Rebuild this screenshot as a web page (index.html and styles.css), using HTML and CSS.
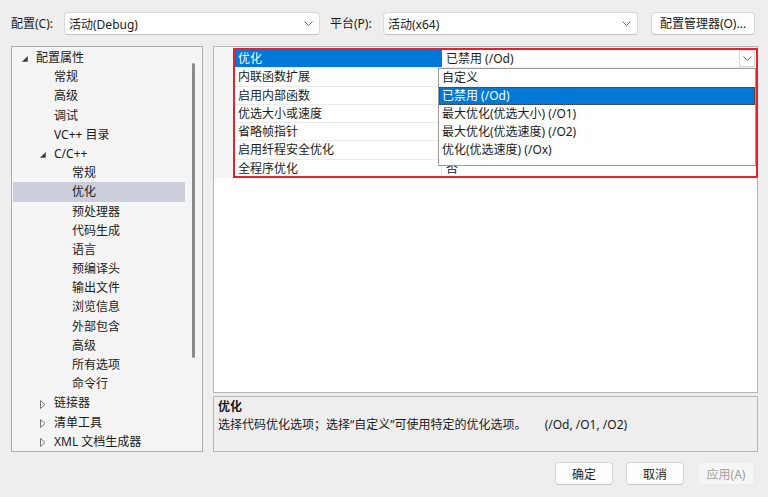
FILE: index.html
```html
<!DOCTYPE html>
<html lang="zh-CN">
<head>
  <meta charset="UTF-8" />
  <title>属性页</title>
  <link rel="stylesheet" href="styles.css">
</head>
<body>

  <div class="toolbar">
    <label class="field-label">配置(C):</label>
    <div class="combo combo-config">
      <span>活动(Debug)</span>
      <svg class="chev" width="9" height="5" viewBox="0 0 9 5"><path d="M0.5 0.5 L4.5 4.5 L8.5 0.5" /></svg>
    </div>
    <label class="field-label platform-label">平台(P):</label>
    <div class="combo combo-platform">
      <span>活动(x64)</span>
      <svg class="chev" width="9" height="5" viewBox="0 0 9 5"><path d="M0.5 0.5 L4.5 4.5 L8.5 0.5" /></svg>
    </div>
    <button class="btn btn-manager">配置管理器(O)...</button>
  </div>

  <div class="main">
    <div class="tree">
      <ul>
        <li class="lvl1"><span class="arrow"><svg width="6" height="6" viewBox="0 0 6 6"><polygon class="open" points="5.5,0.5 5.5,5.5 0.5,5.5" /></svg></span>配置属性</li>
        <li class="lvl2">常规</li>
        <li class="lvl2">高级</li>
        <li class="lvl2">调试</li>
        <li class="lvl2">VC++ 目录</li>
        <li class="lvl2 has-arrow"><span class="arrow"><svg width="6" height="6" viewBox="0 0 6 6"><polygon class="open" points="5.5,0.5 5.5,5.5 0.5,5.5" /></svg></span>C/C++</li>
        <li class="lvl3">常规</li>
        <li class="lvl3 selected">优化</li>
        <li class="lvl3">预处理器</li>
        <li class="lvl3">代码生成</li>
        <li class="lvl3">语言</li>
        <li class="lvl3">预编译头</li>
        <li class="lvl3">输出文件</li>
        <li class="lvl3">浏览信息</li>
        <li class="lvl3">外部包含</li>
        <li class="lvl3">高级</li>
        <li class="lvl3">所有选项</li>
        <li class="lvl3">命令行</li>
        <li class="lvl2 has-arrow"><span class="arrow"><svg width="6" height="9" viewBox="0 0 6 9"><polygon class="closed" points="0.5,0.5 5,4.5 0.5,8.5" /></svg></span>链接器</li>
        <li class="lvl2 has-arrow"><span class="arrow"><svg width="6" height="9" viewBox="0 0 6 9"><polygon class="closed" points="0.5,0.5 5,4.5 0.5,8.5" /></svg></span>清单工具</li>
        <li class="lvl2 has-arrow"><span class="arrow"><svg width="6" height="9" viewBox="0 0 6 9"><polygon class="closed" points="0.5,0.5 5,4.5 0.5,8.5" /></svg></span>XML 文档生成器</li>
      </ul>
      <div class="scrollbar"></div>
    </div>

    <div class="right">
      <div class="grid">
        <div class="grid-top">
          <div class="gutter"></div>
          <div class="rows">
            <div class="row active">
              <div class="name">优化</div>
              <div class="value">已禁用 (/Od)
                <span class="drop-btn"><svg width="9" height="5" viewBox="0 0 9 5"><path d="M0.5 0.5 L4.5 4.5 L8.5 0.5" /></svg></span>
              </div>
            </div>
            <div class="row"><div class="name">内联函数扩展</div><div class="value"></div></div>
            <div class="row"><div class="name">启用内部函数</div><div class="value"></div></div>
            <div class="row"><div class="name">优选大小或速度</div><div class="value"></div></div>
            <div class="row"><div class="name">省略帧指针</div><div class="value"></div></div>
            <div class="row"><div class="name">启用纤程安全优化</div><div class="value"></div></div>
            <div class="row"><div class="name">全程序优化</div><div class="value">否</div></div>
          </div>
        </div>

        <ul class="dropdown">
          <li>自定义</li>
          <li class="picked">已禁用 (/Od)</li>
          <li>最大优化(优选大小) (/O1)</li>
          <li>最大优化(优选速度) (/O2)</li>
          <li>优化(优选速度) (/Ox)</li>
        </ul>
        <div class="highlight"></div>
      </div>

      <div class="desc">
        <div class="desc-title">优化</div>
        <div class="desc-text">选择代码优化选项；选择“自定义”可使用特定的优化选项。<span class="switches">(/Od, /O1, /O2)</span></div>
      </div>
    </div>
  </div>

  <div class="footer">
    <button class="btn">确定</button>
    <button class="btn">取消</button>
    <button class="btn" disabled>应用(A)</button>
  </div>

</body>
</html>
```

FILE: styles.css
```css
body {
  margin: 0;
  width: 768px;
  height: 497px;
  overflow: hidden;
  background-color: #eeeeee;
  font-family: "Noto Sans", "Noto Sans CJK SC", sans-serif;
  font-size: 12px;
  color: #1b1b1b;
}

ul {
  list-style: none;
  margin: 0;
  padding: 0;
}

/* top bar */
.toolbar {
  display: flex;
  align-items: center;
  padding: 12px 0 0 11px;
  height: 23px;
}
.field-label {
  width: 53px;
  line-height: 23px;
}
.platform-label {
  margin-left: 10px;
}
.combo {
  box-sizing: border-box;
  height: 23px;
  display: flex;
  align-items: center;
  justify-content: space-between;
  padding: 0 6px 0 4px;
  background-color: #fff;
  border: 1px solid #dadada;
  border-bottom-color: #c2c2c2;
  border-radius: 4px;
}
.combo-config {
  width: 256px;
}
.combo-platform {
  width: 255px;
}
.chev path,
.drop-btn path {
  fill: none;
  stroke: #6a6a6a;
  stroke-width: 1;
}

.btn {
  box-sizing: border-box;
  height: 23px;
  width: 58px;
  padding: 0;
  font-family: inherit;
  font-size: 12px;
  color: #1b1b1b;
  background-color: #fdfdfd;
  border: 1px solid #d6d6d6;
  border-bottom-color: #c4c4c4;
  border-radius: 4px;
}
.btn:disabled {
  color: #a2a2a2;
  background-color: #f5f5f5;
  border-color: #ececec;
}
.btn-manager {
  width: 104px;
  margin-left: 13px;
  margin-top: -1px;
}

/* main area */
.main {
  display: flex;
  gap: 10px;
  margin-top: 11px;
  padding-left: 11px;
  height: 406px;
}

.tree {
  position: relative;
  box-sizing: border-box;
  width: 192px;
  height: 406px;
  padding-top: 1px;
  background-color: #f5f5f5;
  border: 1px solid #acacac;
  overflow: hidden;
}
.tree ul {
  margin-left: 1px;
  width: 172px;
}
.tree li {
  height: 19.2px;
  line-height: 19.2px;
  white-space: nowrap;
}
.tree li.lvl1 { padding-left: 9px; }
.tree li.lvl2 { padding-left: 41px; }
.tree li.lvl2.has-arrow { padding-left: 27px; }
.tree li.lvl3 { padding-left: 59px; }
.tree li.selected {
  background-color: #cccedb;
}
.arrow {
  display: inline-block;
  width: 14px;
}
.arrow svg {
  vertical-align: middle;
}
.arrow .open {
  fill: #3c3c3c;
  stroke: #3c3c3c;
  stroke-width: 0.5;
}
.arrow .closed {
  fill: none;
  stroke: #777;
  stroke-width: 1;
}
.scrollbar {
  position: absolute;
  left: 180px;
  top: 16px;
  width: 3px;
  height: 295px;
  border-radius: 2px;
  background-color: #8c8c8c;
}

.right {
  display: flex;
  flex-direction: column;
  gap: 3px;
  width: 545px;
}

.grid {
  position: relative;
  box-sizing: border-box;
  height: 347px;
  background-color: #fff;
  border: 1px solid #b6b6b6;
}
.grid-top {
  display: flex;
  height: 131px;
  background-color: #f5f5f5;
}
.gutter {
  width: 21px;
}
.rows {
  flex: 1;
  padding-top: 3px;
  margin-right: 1px;
}
.row {
  box-sizing: border-box;
  display: flex;
  height: 18.3px;
  line-height: 17px;
  background-color: #fff;
  border-bottom: 1px solid #ebebeb;
}
.row .name {
  width: 203px;
  padding-left: 3px;
  border-right: 1px solid #e2e2e2;
  white-space: nowrap;
}
.row .value {
  flex: 1;
  display: flex;
  justify-content: space-between;
  align-items: flex-start;
  padding-left: 4px;
}
.row.active .name {
  background-color: #0078d7;
  color: #fff;
  border-right-color: #0078d7;
}
.drop-btn {
  box-sizing: border-box;
  width: 16px;
  height: 17px;
  margin-right: 1px;
  display: flex;
  align-items: center;
  justify-content: center;
  border: 1px solid #d8d8d8;
  background-color: #fff;
}

.dropdown {
  position: absolute;
  left: 224px;
  top: 21px;
  box-sizing: border-box;
  width: 318px;
  height: 98px;
  background-color: #fff;
  border: 1px solid #9c9c9c;
}
.dropdown li {
  height: 18px;
  line-height: 18px;
  padding-left: 3px;
}
.dropdown li.picked {
  background-color: #0078d7;
  color: #fff;
  outline: 1px dotted #3a3a3a;
  outline-offset: -1px;
}

.highlight {
  position: absolute;
  left: 19px;
  top: 1px;
  box-sizing: border-box;
  width: 525px;
  height: 130px;
  border: 2px solid #e8202e;
}

.desc {
  box-sizing: border-box;
  height: 56px;
  padding: 1px 4px;
  background-color: #eeeeee;
  border: 1px solid #b6b6b6;
  line-height: 18px;
}
.desc-title {
  font-weight: bold;
}
.switches {
  margin-left: 18px;
}

/* bottom buttons */
.footer {
  display: flex;
  justify-content: flex-end;
  gap: 13px;
  margin-top: 10px;
  padding-right: 13px;
}
```
